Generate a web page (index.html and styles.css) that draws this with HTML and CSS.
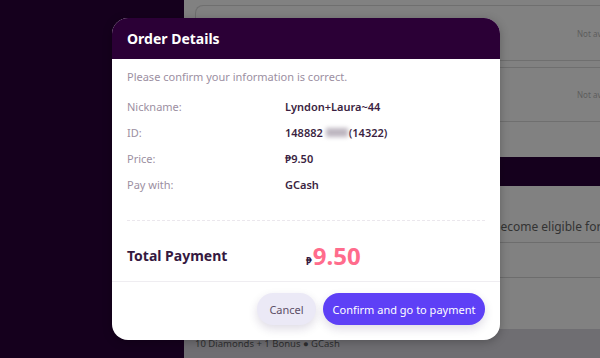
FILE: index.html
```html
<!DOCTYPE html>
<html>
<head>
<meta charset="utf-8">
<link rel="stylesheet" href="styles.css">
</head>
<body>
<div class="page">
  <aside class="sidebar"></aside>
  <main class="main">
    <div class="card card-a"><span class="na">Not available</span></div>
    <div class="card card-b"><span class="na">Not available</span></div>
    <div class="spacer"></div>
    <div class="band"></div>
    <div class="promo"><span class="promo-text">become eligible for promotion</span></div>
    <div class="empty-row"></div>
    <div class="gap-row"></div>
    <div class="summary">10 Diamonds + 1 Bonus ● GCash</div>
  </main>
</div>

<div class="modal">
  <div class="modal-head">Order Details</div>
  <div class="modal-body">
    <p class="hint">Please confirm your information is correct.</p>
    <div class="rows">
      <div class="row"><span class="label">Nickname:</span><span class="value">Lyndon+Laura~44</span></div>
      <div class="row"><span class="label">ID:</span><span class="value">148882<span class="blur"></span>(14322)</span></div>
      <div class="row"><span class="label">Price:</span><span class="value">₱9.50</span></div>
      <div class="row"><span class="label">Pay with:</span><span class="value">GCash</span></div>
    </div>
    <div class="divider"></div>
    <div class="total">
      <span class="total-label">Total Payment</span>
      <span class="total-amount"><span class="cur">₱</span>9.50</span>
    </div>
  </div>
  <div class="modal-foot">
    <button class="btn btn-cancel">Cancel</button>
    <button class="btn btn-confirm">Confirm and go to payment</button>
  </div>
</div>
</body>
</html>
```

FILE: styles.css
```css
* { box-sizing: border-box; }
html, body { margin: 0; padding: 0; }
body {
  width: 600px;
  height: 358px;
  overflow: hidden;
  font-family: "Noto Sans", "Open Sans", sans-serif;
  background: #15001d;
  position: relative;
}
.page {
  display: flex;
  height: 358px;
}
.sidebar {
  width: 184px;
  flex: none;
  background: #15001d;
}
.main {
  flex: 1;
  min-width: 0;
  overflow: hidden;
  background: #818181;
  display: flex;
  flex-direction: column;
}
.card {
  margin-left: 11px;
  border: 1px solid #6f6f6f;
  border-right: none;
  display: flex;
  align-items: center;
  justify-content: flex-end;
}
.card-a {
  margin-top: 5px;
  height: 56px;
  border-radius: 8px 0 0 0;
}
.card-b {
  margin-top: 6px;
  height: 55px;
  border-radius: 0;
  border-left: none;
}
.na {
  font-size: 8px;
  color: #5d5d5d;
  width: 23px;
  overflow: hidden;
  white-space: nowrap;
}
.spacer { height: 35px; }
.band {
  height: 29px;
  background: #15001d;
}
.promo {
  height: 57px;
  display: flex;
  align-items: flex-end;
  padding-bottom: 7px;
  padding-left: 309px;
  border-bottom: 1px solid #6d6d6d;
  white-space: nowrap;
  overflow: hidden;
}
.promo-text {
  font-size: 12px;
  color: #333;
}
.empty-row {
  height: 35px;
  border-bottom: 1px solid #6d6d6d;
}
.gap-row { height: 51px; }
.summary {
  flex: 1;
  background: #6f6e72;
  font-size: 9.5px;
  line-height: 14px;
  color: #2e2e30;
  padding: 8px 0 0 11px;
}

.modal {
  position: absolute;
  left: 112px;
  top: 18px;
  width: 388px;
  height: 322px;
  background: #fff;
  border-radius: 16px;
  overflow: hidden;
  box-shadow: 0 2px 10px rgba(0,0,0,0.25);
  display: flex;
  flex-direction: column;
}
.modal-head {
  height: 41px;
  background: #2b0036;
  color: #fff;
  font-weight: 700;
  font-size: 14px;
  display: flex;
  align-items: center;
  padding-left: 15px;
}
.modal-body {
  padding: 9px 15px 11px;
  border-bottom: 1px solid #efedf1;
}
.hint {
  margin: 0;
  font-size: 11px;
  line-height: 18px;
  color: #9c8fa2;
}
.rows { margin-top: 7px; }
.row {
  display: flex;
  height: 26px;
  align-items: center;
  font-size: 11px;
}
.label {
  width: 158px;
  color: #9c8fa2;
}
.value {
  color: #3b1f42;
  font-weight: 600;
  display: flex;
  align-items: center;
}
.blur {
  display: inline-block;
  width: 22px;
  height: 9px;
  margin: 0 1px 0 3px;
  background: #bdb6c0;
  filter: blur(2px);
}
.divider {
  margin-top: 23px;
  border-top: 1px dashed #ebe7ed;
}
.total {
  margin-top: 19px;
  height: 30px;
  display: flex;
  align-items: center;
}
.total-label {
  width: 179px;
  font-weight: 700;
  font-size: 14px;
  color: #35193f;
}
.total-amount {
  font-weight: 700;
  font-size: 24px;
  color: #ff6c8c;
  display: flex;
  align-items: baseline;
}
.cur {
  font-size: 10px;
  color: #35193f;
  margin-right: 1px;
}
.modal-foot {
  flex: 1;
  display: flex;
  justify-content: flex-end;
  align-items: flex-start;
  gap: 7px;
  padding: 11px 15px 0;
}
.btn {
  height: 32px;
  border: none;
  border-radius: 16px;
  font-family: inherit;
  font-size: 11px;
  white-space: nowrap;
  padding: 0;
  box-shadow: 0 4px 10px rgba(40,20,80,0.15);
}
.btn-cancel {
  width: 59px;
  background: #ebe9f6;
  color: #5d4f66;
}
.btn-confirm {
  width: 162px;
  background: #5e40f6;
  color: #fff;
}
```
